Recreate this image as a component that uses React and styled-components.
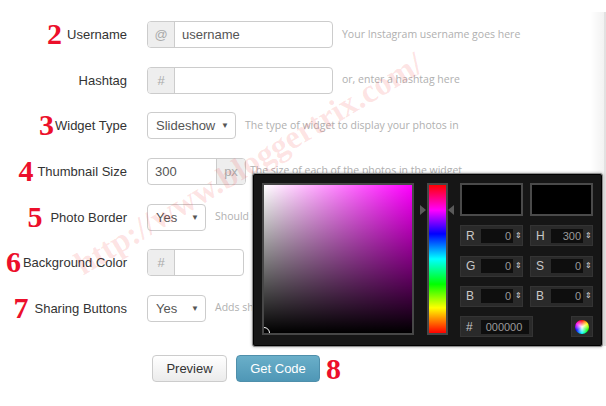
import React from 'react';
import styled, { createGlobalStyle } from 'styled-components';

const GlobalStyle = createGlobalStyle`
    html, body {
        margin: 0;
        padding: 0;
        background: #ffffff;
        font-family: 'Liberation Sans', Arial, sans-serif;
    }
`

const Page = styled.div`
    position: relative;
    width: 606px;
    height: 406px;
    overflow: hidden;
    box-sizing: border-box;
    padding-top: 21px;
`

const EdgeShade = styled.div`
    position: absolute;
    right: 0;
    top: 12px;
    width: 14px;
    height: 334px;
    background: linear-gradient(to right, rgba(0,0,0,0), rgba(0,0,0,0.05));
    border-right: 2px solid #e2e2e2;
`

const Form = styled.div`
    display: flex;
    flex-direction: column;
    gap: 18.67px;
`

const Row = styled.div`
    display: grid;
    grid-template-columns: 127px auto;
    grid-template-rows: 27px;
    column-gap: 20px;
    align-items: center;
    height: 27px;
`

const Label = styled.div`
    text-align: right;
    font-size: 13px;
    line-height: 27px;
    height: 27px;
    color: #333;
    white-space: nowrap;
`

const Num = styled.span`
    font-family: 'Liberation Serif', 'Times New Roman', serif;
    font-weight: bold;
    font-size: 30px;
    color: #ec0f2b;
    vertical-align: -5px;
    margin-right: ${p => p.gap || 4}px;
    line-height: 0;
`

const Control = styled.div`
    display: flex;
    align-items: center;
    gap: ${p => p.gap || 9}px;
`

const Group = styled.div`
    display: flex;
    height: 27px;
    box-sizing: border-box;
    border: 1px solid #cccccc;
    border-radius: 4px;
    overflow: hidden;
    background: #fff;
`

const Addon = styled.div`
    width: ${p => p.w}px;
    display: flex;
    align-items: center;
    justify-content: center;
    background: #eeeeee;
    color: #aaaaaa;
    font-size: 13px;
    ${p => p.right ? 'border-left: 1px solid #cccccc;' : 'border-right: 1px solid #cccccc;'}
`

const Field = styled.div`
    width: ${p => p.w}px;
    display: flex;
    align-items: center;
    padding-left: 7px;
    box-sizing: border-box;
    font-size: 13px;
    color: #555;
`

const Select = styled.div`
    width: ${p => p.w}px;
    height: 27px;
    box-sizing: border-box;
    border: 1px solid #cccccc;
    border-radius: 4px;
    display: flex;
    align-items: center;
    justify-content: space-between;
    padding: 0 6px 0 8px;
    font-size: 13px;
    color: #555;
    &::after {
        content: '▼';
        font-size: 8px;
        color: #555;
    }
`

const Help = styled.span`
    font-family: 'Open Sans', sans-serif;
    font-size: 10.5px;
    color: #b0b0b0;
    white-space: nowrap;
    margin-top: -2px;
`

const Buttons = styled.div`
    display: flex;
    align-items: center;
    gap: 9px;
    margin-top: 32px;
    padding-left: 152px;
`

const Button = styled.div`
    height: 27px;
    box-sizing: border-box;
    width: ${p => p.w}px;
    display: flex;
    align-items: center;
    justify-content: center;
    border-radius: 4px;
    font-size: 13px;
    border: 1px solid ${p => p.primary ? '#4f8fab' : '#cccccc'};
    color: ${p => p.primary ? '#ffffff' : '#333333'};
    background: ${p => p.primary
        ? 'linear-gradient(to bottom, #6aafc9, #4f97b6)'
        : 'linear-gradient(to bottom, #ffffff, #ebebeb)'};
`

const Eight = styled(Num)`
    vertical-align: 0;
    line-height: 1;
    margin-left: -3px;
`

const Watermark = styled.div`
    position: absolute;
    left: 86px;
    top: 248px;
    font-family: 'Liberation Serif', 'Times New Roman', serif;
    font-weight: bold;
    font-size: 33px;
    line-height: 33px;
    color: rgba(240, 40, 40, 0.13);
    white-space: nowrap;
    transform-origin: 0 100%;
    transform: rotate(-31deg);
    pointer-events: none;
`

/* colour picker popover */

const Picker = styled.div`
    position: absolute;
    left: 252px;
    top: 173px;
    width: 351px;
    height: 174px;
    box-sizing: border-box;
    padding: 9px;
    display: flex;
    background: #161616;
    border: 1px solid #8e8e8e;
    border-radius: 3px;
    box-shadow: 0 0 3px rgba(0,0,0,0.35), inset 0 0 0 1px #000;
`

const SatBox = styled.div`
    position: relative;
    width: 152px;
    height: 152px;
    box-sizing: border-box;
    border: 2px solid #474747;
    overflow: hidden;
    background: linear-gradient(to top, #000, rgba(0,0,0,0)),
        linear-gradient(to right, #fff, #f0f);
`

const SatMarker = styled.div`
    position: absolute;
    left: -6px;
    bottom: -6px;
    width: 10px;
    height: 10px;
    border-radius: 50%;
    border: 1px solid #fff;
`

const HueCol = styled.div`
    position: relative;
    width: 34px;
    margin-left: 6px;
    display: flex;
    justify-content: center;
`

const HueBar = styled.div`
    width: 21px;
    height: 152px;
    box-sizing: border-box;
    border: 2px solid #474747;
    background: linear-gradient(to bottom, #f00, #f0f 17%, #00f 33%, #0ff 50%, #0f0 67%, #ff0 83%, #f00);
`

const Arrow = styled.div`
    position: absolute;
    top: 22px;
    width: 0;
    height: 0;
    border-top: 5px solid transparent;
    border-bottom: 5px solid transparent;
    ${p => p.right
        ? 'right: 0; border-right: 6px solid #5a5a5a;'
        : 'left: 0; border-left: 6px solid #5a5a5a;'}
`

const Side = styled.div`
    margin-left: 6px;
    width: 133px;
    display: flex;
    flex-direction: column;
    justify-content: space-between;
`

const Pair = styled.div`
    display: flex;
    justify-content: space-between;
`

const Swatch = styled.div`
    width: 63px;
    height: 33px;
    box-sizing: border-box;
    background: #000;
    border: 2px solid #4a4a4a;
`

const Chan = styled.div`
    width: ${p => p.w || 63}px;
    height: 21px;
    box-sizing: border-box;
    background: #2a2a2a;
    border: 1px solid #343434;
    display: flex;
    align-items: center;
    padding-left: 5px;
`

const ChanKey = styled.span`
    width: 15px;
    font-size: 12px;
    color: #c8c8c8;
`

const ChanVal = styled.span`
    width: ${p => p.w || 32}px;
    height: 14px;
    background: #0e0e0e;
    color: #9a9a9a;
    font-size: 11px;
    line-height: 14px;
    text-align: ${p => p.center ? 'center' : 'right'};
    padding-right: 2px;
    box-sizing: border-box;
`

const Spin = styled.span`
    margin-left: 2px;
    font-size: 8px;
    color: #ddd;
    line-height: 1;
`

const WheelBtn = styled.div`
    width: 22px;
    height: 21px;
    box-sizing: border-box;
    background: #2a2a2a;
    border: 1px solid #343434;
    display: flex;
    align-items: center;
    justify-content: center;
`

const Wheel = styled.div`
    width: 14px;
    height: 14px;
    border-radius: 50%;
    background: radial-gradient(circle, #fff 0%, rgba(255,255,255,0) 70%),
        conic-gradient(#f00, #ff0, #0f0, #0ff, #00f, #f0f, #f00);
`

const Channel = ({k, v}) => (
    <Chan>
        <ChanKey>{k}</ChanKey>
        <ChanVal>{v}</ChanVal>
        <Spin>⇕</Spin>
    </Chan>
)

const App = () => {
    return (
        <Page>
            <GlobalStyle/>
            <EdgeShade/>
            <Form>
                <Row>
                    <Label><Num gap={5}>2</Num>Username</Label>
                    <Control>
                        <Group>
                            <Addon w={26}>@</Addon>
                            <Field w={157}>username</Field>
                        </Group>
                        <Help>Your Instagram username goes here</Help>
                    </Control>
                </Row>
                <Row>
                    <Label>Hashtag</Label>
                    <Control>
                        <Group>
                            <Addon w={26}>#</Addon>
                            <Field w={157}/>
                        </Group>
                        <Help>or, enter a hashtag here</Help>
                    </Control>
                </Row>
                <Row>
                    <Label><Num gap={1}>3</Num>Widget Type</Label>
                    <Control>
                        <Select w={89}>Slideshow</Select>
                        <Help>The type of widget to display your photos in</Help>
                    </Control>
                </Row>
                <Row>
                    <Label><Num gap={4}>4</Num>Thumbnail Size</Label>
                    <Control gap={4}>
                        <Group>
                            <Field w={68}>300</Field>
                            <Addon w={28} right>px</Addon>
                        </Group>
                        <Help>The size of each of the photos in the widget</Help>
                    </Control>
                </Row>
                <Row>
                    <Label><Num gap={8}>5</Num>Photo Border</Label>
                    <Control>
                        <Select w={59}>Yes</Select>
                        <Help>Should the photos have a border</Help>
                    </Control>
                </Row>
                <Row>
                    <Label><Num gap={2}>6</Num>Background Color</Label>
                    <Control>
                        <Group>
                            <Addon w={26}>#</Addon>
                            <Field w={68}/>
                        </Group>
                    </Control>
                </Row>
                <Row>
                    <Label><Num gap={6}>7</Num>Sharing Buttons</Label>
                    <Control>
                        <Select w={59}>Yes</Select>
                        <Help>Adds sharing buttons to the widget</Help>
                    </Control>
                </Row>
            </Form>
            <Buttons>
                <Button w={75}>Preview</Button>
                <Button w={84} primary>Get Code</Button>
                <Eight>8</Eight>
            </Buttons>
            <Watermark>http://www.bloggertrix.com/</Watermark>
            <Picker>
                <SatBox><SatMarker/></SatBox>
                <HueCol>
                    <Arrow/>
                    <HueBar/>
                    <Arrow right/>
                </HueCol>
                <Side>
                    <Pair><Swatch/><Swatch/></Pair>
                    <Pair><Channel k="R" v="0"/><Channel k="H" v="300"/></Pair>
                    <Pair><Channel k="G" v="0"/><Channel k="S" v="0"/></Pair>
                    <Pair><Channel k="B" v="0"/><Channel k="B" v="0"/></Pair>
                    <Pair>
                        <Chan w={73}>
                            <ChanKey>#</ChanKey>
                            <ChanVal w={48} center>000000</ChanVal>
                        </Chan>
                        <WheelBtn><Wheel/></WheelBtn>
                    </Pair>
                </Side>
            </Picker>
        </Page>
    );
}

export default App;
